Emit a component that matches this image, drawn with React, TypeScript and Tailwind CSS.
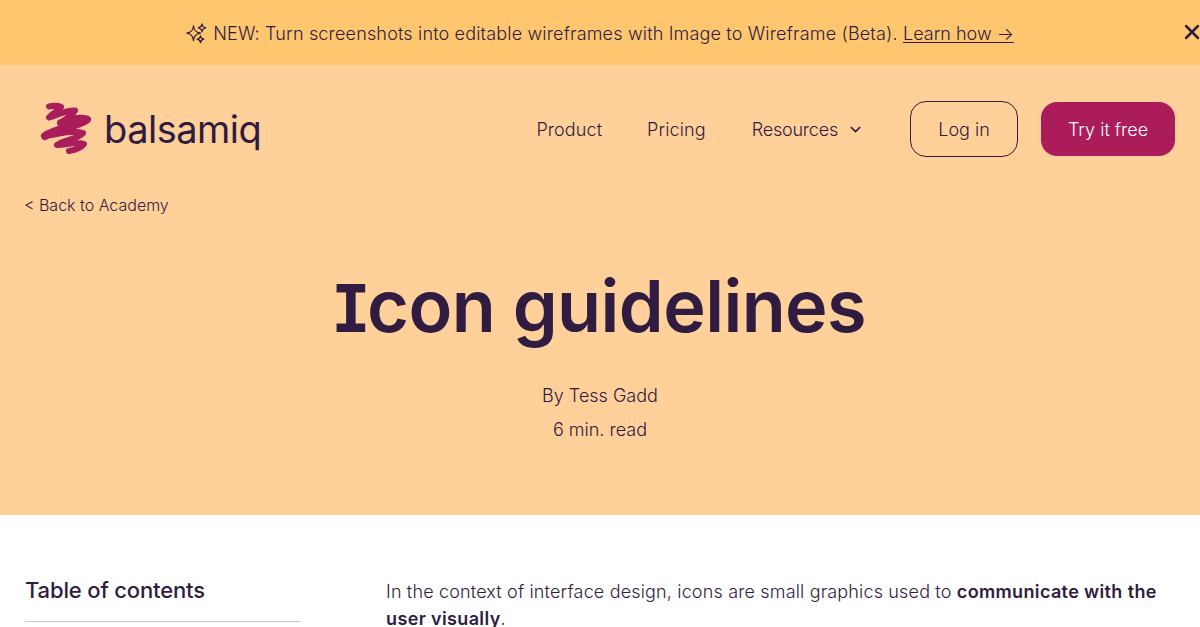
import React from "react";
import { ChevronDown, X } from "lucide-react";

const font = { fontFamily: "Inter, sans-serif" };

function Sparkles() {
  return (
    <svg width="21" height="21" viewBox="187 23 21 21" fill="none" stroke="#2f1c40" strokeWidth="1.3" strokeLinejoin="round" className="mr-[6px] shrink-0">
      <path d="M194.5 26 C195 30.5 196.5 32.5 201.5 33.2 C196.5 34 195 36 194.5 40.5 C194 36 192.5 34 187.8 33.2 C192.5 32.5 194 30.5 194.5 26Z" />
      <path d="M203 24 C203.3 26.5 204.2 27.4 206.8 27.8 C204.2 28.2 203.3 29.1 203 31.6 C202.7 29.1 201.8 28.2 199.2 27.8 C201.8 27.4 202.7 26.5 203 24Z" />
      <path d="M201.5 36 C201.8 38 202.6 38.8 204.8 39.2 C202.6 39.6 201.8 40.4 201.5 42.6 C201.2 40.4 200.4 39.6 198.2 39.2 C200.4 38.8 201.2 38 201.5 36Z" />
    </svg>
  );
}

function Logo() {
  return (
    <svg width="52" height="54" viewBox="40 103 52 54" className="shrink-0">
      <g fill="none" stroke="#ab1c5a" strokeLinecap="round" strokeLinejoin="round">
        <path d="M49 107.5 C54 106.5 58 106.5 61 108 C58 112 53 114 49 118.5 C56 117 65 111 75 111.5 C73 116 65 120 61 124" strokeWidth="6" />
        <path d="M61 124 C69 121 79 118 87 120.5 C78 128 56 129 45 137" strokeWidth="8" />
        <path d="M45 137 C56 136 72 130 83 134 C78 140 64 141 57 146 C66 146 76 142 84 145 C81 149 75 151 69 152" strokeWidth="6" />
      </g>
    </svg>
  );
}

export default function App() {
  return (
    <div className="h-[627px] overflow-hidden bg-white text-[#2f1c40]" style={font}>
      <div className="relative flex h-[65px] items-center justify-center bg-[#ffc670] pt-[1px] text-[18px] font-light">
        <Sparkles />
        <span className="tracking-[0.17px]">NEW: Turn screenshots into editable wireframes with Image to Wireframe (Beta).&nbsp;</span>
        <a className="underline underline-offset-2">Learn how →</a>
        <X className="absolute right-[-4px] top-[20px]" size={24} strokeWidth={2.5} />
      </div>
      <div className="flex h-[450px] flex-col bg-[#ffd09a]">
        <div className="flex h-[128px] items-center justify-between pl-[40px] pr-[25px]">
          <div className="flex items-center gap-[12px]">
            <Logo />
            <span className="text-[38px] leading-none tracking-[-0.5px]">balsamiq</span>
          </div>
          <div className="flex items-center text-[18px] font-light">
            <a className="tracking-[0.1px]">Product</a>
            <a className="ml-[45px] tracking-[0.1px]">Pricing</a>
            <a className="ml-[46px] tracking-[-0.2px]">Resources</a>
            <ChevronDown className="ml-[9px]" size={17} />
            <a className="ml-[46px] flex h-[56px] w-[108px] items-center justify-center rounded-[16px] border border-[#2f1c40]">Log in</a>
            <a className="ml-[23px] flex h-[54px] w-[134px] items-center justify-center rounded-[16px] bg-[#ab1c5a] text-white">Try it free</a>
          </div>
        </div>
        <div className="pl-[24px] text-[16px] font-light leading-[24px]">&lt; Back to Academy</div>
        <h1 className="mt-[46px] text-center text-[72px] font-semibold leading-[86px] tracking-[-0.6px]">
          <span className="-mx-[3px] text-[66px]" style={{ fontFamily: "'DejaVu Sans Mono', monospace" }}>I</span>con guidelines
        </h1>
        <div className="mt-[26px] text-center text-[18px] font-light leading-[34px]">
          <div>By Tess Gadd</div>
          <div>6 min. read</div>
        </div>
      </div>
      <div className="flex pl-[25px] pr-[25px] pt-[60px]">
        <div className="w-[276px] shrink-0">
          <div className="border-b border-[#c9c6cc] pb-[16px] text-[22px] font-medium leading-[30px] tracking-[-0.15px]">Table of contents</div>
        </div>
        <p className="ml-[85px] pt-[3px] text-[18px] font-light leading-[27px] tracking-[0.16px]">
          In the context of interface design, icons are small graphics used to <strong className="font-semibold tracking-[0.36px]">communicate with the user visually</strong>.
        </p>
      </div>
    </div>
  );
}
